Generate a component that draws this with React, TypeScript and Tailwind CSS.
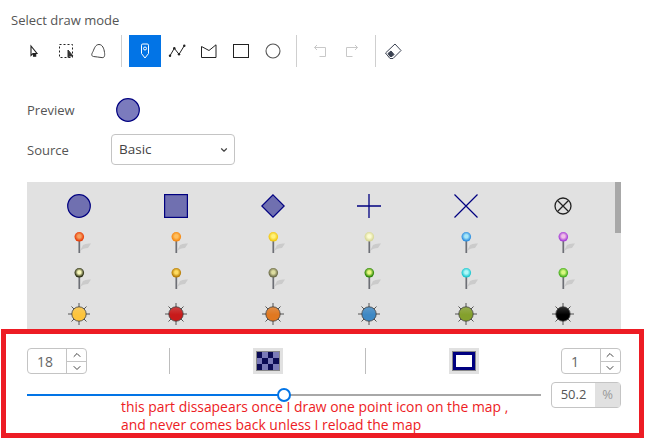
import { ChevronDown, ChevronUp } from "lucide-react";

const NAVY = "#000080";
const FILL = "#7070b0";

const pinColors = [
  ["#f6a060", "#e8400c"],
  ["#ffc060", "#f58a14"],
  ["#fff27a", "#f2c814"],
  ["#fbfbd0", "#d8d898"],
  ["#a8e8f8", "#3090e0"],
  ["#f0c0e8", "#a840d8"],
  ["#f6f6b8", "#2e3216"],
  ["#ffdc60", "#b87e08"],
  ["#dcdca0", "#6e6e4a"],
  ["#e8f880", "#2c8808"],
  ["#b0f8f8", "#20c8d0"],
  ["#d8f880", "#48b020"],
];

const sunColors = ["#fdc43c", "#c81a1a", "#e07820", "#3e88c4", "#84a02c", "#000000"];

function Pin({ index }: { index: number }) {
  const [light, dark] = pinColors[index];
  const id = `pin-${index}`;
  return (
    <svg width="24" height="24" viewBox="0 0 24 24">
      <defs>
        <radialGradient id={id} cx="50%" cy="45%" r="55%">
          <stop offset="0%" stopColor={light} />
          <stop offset="30%" stopColor={light} />
          <stop offset="85%" stopColor={dark} />
        </radialGradient>
      </defs>
      <path d="M13 21 L16 15 Q19 13 24 13.500 L21 18 Q16 18 13 21Z" fill="#cbcbcb" />
      <path d="M12.300 10 V23" stroke="#6d6f76" strokeWidth="1.700" />
      <circle cx="12.300" cy="6.800" r="4.800" fill={`url(#${id})`} />
    </svg>
  );
}

function Sun({ color, index }: { color: string; index: number }) {
  const id = `sun-${index}`;
  return (
    <svg width="24" height="24" viewBox="0 0 24 24">
      <defs>
        <linearGradient id={id} x1="0" y1="0" x2="0" y2="1">
          <stop offset="0%" stopColor={color} stopOpacity="0.8" />
          <stop offset="55%" stopColor={color} />
        </linearGradient>
      </defs>
      <g stroke="#555" strokeWidth="1">
        <path d="M12 1V5M12 19V23M1 12H5M19 12H23M4.500 4.500L7 7M19.500 4.500L17 7M4.500 19.500L7 17M19.500 19.500L17 17" />
      </g>
      <circle cx="12" cy="12" r="7.200" fill={`url(#${id})`} stroke="#3c3c3c" strokeWidth="0.800" />
    </svg>
  );
}

function Shape({ kind }: { kind: string }) {
  return (
    <svg width="24" height="24" viewBox="0 0 24 24" fill={FILL} stroke={NAVY} strokeWidth="1.200">
      {kind === "circle" && <circle cx="12" cy="12" r="11.300" />}
      {kind === "square" && <rect x="0.600" y="0.600" width="22.800" height="22.800" />}
      {kind === "diamond" && <path d="M12 .8 23.200 12 12 23.200 .8 12Z" />}
      {kind === "plus" && <path d="M12 0V24M0 12H24" strokeWidth="1.300" fill="none" />}
      {kind === "x" && <path d="M.5 .5 23.500 23.500M23.500 .5 .5 23.500" fill="none" />}
      {kind === "target" && (
        <g fill="none" stroke="#222" strokeWidth="1.300">
          <circle cx="12" cy="12" r="8" />
          <path d="M6.500 6.500 17.500 17.500M17.500 6.500 6.500 17.500" />
        </g>
      )}
    </svg>
  );
}

function ToolButton({ active, children }: { active?: boolean; children: React.ReactNode }) {
  return (
    <div className={`flex h-8 w-8 items-center justify-center ${active ? "bg-[#0274e6]" : ""}`}>
      {children}
    </div>
  );
}

function Sep({ className }: { className: string }) {
  return <div className={`h-8 w-px bg-[#cfcfcf] ${className}`} />;
}

function Stepper({ value }: { value: string }) {
  return (
    <div className="flex h-[26px] w-[60px] rounded-sm border border-[#c4c4c4]">
      <div className="flex flex-1 items-center pl-[9px] text-[14px] text-[#666]">{value}</div>
      <div className="flex w-[20px] flex-col border-l border-[#c4c4c4] text-[#444]">
        <div className="flex flex-1 items-center justify-center border-b border-[#c4c4c4]">
          <ChevronUp size={12} strokeWidth={2} />
        </div>
        <div className="flex flex-1 items-center justify-center">
          <ChevronDown size={12} strokeWidth={2} />
        </div>
      </div>
    </div>
  );
}

const checker = [
  [1, 0, 1, 0],
  [0, 1, 0, 1],
  [1, 0, 1, 0],
];

export default function App() {
  const shapes = ["circle", "square", "diamond", "plus", "x", "target"];
  return (
    <div className="h-[440px] w-[646px] overflow-hidden bg-white font-['Open_Sans',sans-serif]">
      <div className="pl-[11px] pt-[11px] text-[13px] leading-[18px] text-[#555]">Select draw mode</div>

      {/* draw mode toolbar */}
      <div className="mt-[6px] flex items-center pl-[18px]">
        <ToolButton>
          <svg width="16" height="16" viewBox="0 0 16 16" fill="none" stroke="#222" strokeWidth="1.100">
            <path d="M5 3V12.500L7 10.500H11Z" />
            <rect x="7.500" y="11" width="2.200" height="2.200" fill="#222" />
          </svg>
        </ToolButton>
        <ToolButton>
          <svg width="18" height="18" viewBox="0 0 18 18" fill="none">
            <rect x="2.500" y="2.500" width="13" height="13" stroke="#222" strokeDasharray="2 2" />
            <path d="M11 8V15.500L12.800 14H16Z" fill="#333" stroke="#333" />
          </svg>
        </ToolButton>
        <ToolButton>
          <svg width="16" height="16" viewBox="0 0 16 16" fill="none" stroke="#444" strokeWidth="1">
            <path d="M9 1.500C5.500 1.500 4.500 5 3 8.500 1.500 11 1 13 3.500 13.500 6 14 9 14 12 14.600 14.500 15 15 12.500 14.500 9.500 14 5.500 12.500 1.500 9 1.500Z" />
          </svg>
        </ToolButton>
        <Sep className="mx-[7px]" />
        <ToolButton active>
          <svg width="16" height="16" viewBox="0 0 16 16" fill="none" stroke="#fff" strokeWidth="1">
            <path d="M4.500 2.200Q4.500 1 5.800 1H10.200Q11.500 1 11.500 2.200V10.500L8 15 4.500 10.500Z" />
            <circle cx="8" cy="5.500" r="1.500" />
          </svg>
        </ToolButton>
        <ToolButton>
          <svg width="18" height="18" viewBox="0 0 18 18" fill="none" stroke="#222" strokeWidth="1">
            <path d="M2 13.700 6.300 6.300 11 12.300 16.300 3.700" />
            <g fill="#222" stroke="none">
              <circle cx="2" cy="13.700" r="1.200" />
              <circle cx="6.300" cy="6.300" r="1.200" />
              <circle cx="11" cy="12.300" r="1.200" />
              <circle cx="16.300" cy="3.700" r="1.200" />
            </g>
          </svg>
        </ToolButton>
        <ToolButton>
          <svg width="16" height="14" viewBox="0 0 16 14" fill="none" stroke="#222" strokeWidth="1">
            <path d="M.5 2.500 8 6.500 15 .8V13.500H.5Z" />
          </svg>
        </ToolButton>
        <ToolButton>
          <svg width="16" height="14" viewBox="0 0 16 14" fill="none" stroke="#222" strokeWidth="1">
            <rect x=".5" y=".5" width="15" height="13" />
          </svg>
        </ToolButton>
        <ToolButton>
          <svg width="16" height="16" viewBox="0 0 16 16" fill="none" stroke="#555" strokeWidth="1.100">
            <circle cx="8" cy="8" r="7" />
          </svg>
        </ToolButton>
        <Sep className="mx-[7px]" />
        <ToolButton>
          <svg width="14" height="14" viewBox="0 0 14 14" fill="none" stroke="#c8c8c8" strokeWidth="1">
            <path d="M1.500 3.500H12.500V12.500H6.500M4 1 1.500 3.500 4 6" />
          </svg>
        </ToolButton>
        <ToolButton>
          <svg width="14" height="14" viewBox="0 0 14 14" fill="none" stroke="#c8c8c8" strokeWidth="1">
            <path d="M12.500 3.500H1.500V12.500H7.500M10 1 12.500 3.500 10 6" />
          </svg>
        </ToolButton>
        <Sep className="ml-[7px] mr-px" />
        <ToolButton>
          <svg width="18" height="18" viewBox="0 0 18 18" fill="none" stroke="#3b4252" strokeWidth="1">
            <path d="M1.500 11 11 2 17 8.500 9 16.500H6Z" />
            <path d="M4 11.500 7 9 10 12.500 8 14.500H6Z" fill="#3b4252" />
          </svg>
        </ToolButton>
      </div>

      <div className="mt-[31px] flex h-6 items-center pl-[27px]">
        <div className="w-[89px] pt-[2px] text-[13px] text-[#555]">Preview</div>
        <svg width="24" height="24" viewBox="0 0 24 24">
          <circle cx="12" cy="12" r="11.300" fill="#7b7bbd" stroke={NAVY} strokeWidth="1.200" />
        </svg>
      </div>

      <div className="mt-[12px] flex items-center pl-[27px]">
        <div className="w-[84px] pt-[3px] text-[13px] text-[#555]">Source</div>
        <div className="flex h-[31px] w-[124px] items-center justify-between rounded-sm border border-[#c4c4c4] pl-[7px] pr-[5px] text-[13.500px] text-[#444]">
          <span className="-mt-px">Basic</span>
          <ChevronDown size={10} strokeWidth={2.800} className="text-[#444]" />
        </div>
      </div>

      {/* symbol gallery */}
      <div className="relative ml-[27px] mt-[17px] h-[147px] w-[594px] overflow-hidden bg-[#e1e1e1] pl-[4px] pt-[6px]">
        <div className="grid w-[580px] grid-cols-6">
          {shapes.map((s) => (
            <div key={s} className="flex h-9 items-center justify-center">
              <Shape kind={s} />
            </div>
          ))}
          {pinColors.map((_, i) => (
            <div key={i} className="flex h-9 items-center justify-center">
              <Pin index={i} />
            </div>
          ))}
          {sunColors.map((c, i) => (
            <div key={c} className="flex h-9 items-center justify-center">
              <Sun color={c} index={i} />
            </div>
          ))}
        </div>
        <div className="absolute right-0 top-0 h-[51px] w-[6px] bg-[#a8a8a8]" />
      </div>

      {/* annotated symbol controls */}
      <div className="relative ml-px h-[109px] w-[643px] border-[5px] border-[#ed1c24] pb-[26px] pl-[21px] pr-[18px] pt-[14px]">
        <div className="flex items-center justify-between">
          <Stepper value="18" />
          <div className="h-[26px] w-px bg-[#bdbdbd]" />
          <div className="flex h-[26px] w-[30px] items-center justify-center bg-[#e1e1e1]">
            <div className="grid h-[20px] w-[24px] grid-cols-4 border border-[#888] bg-[#7a7ab8]">
              {checker.flat().map((on, i) => (
                <div key={i} className={on ? "bg-[#0b0b55]" : ""} />
              ))}
            </div>
          </div>
          <div className="h-[26px] w-px bg-[#bdbdbd]" />
          <div className="flex h-[26px] w-[30px] items-center justify-center bg-[#e1e1e1]">
            <div className="border border-[#888]">
              <div className="h-[18px] w-[22px] border-[3px] border-[#000080] bg-white" />
            </div>
          </div>
          <Stepper value="1" />
        </div>

        <div className="mt-2 flex items-center gap-[10px]">
          <div className="relative flex h-[2px] flex-1 bg-[#a8a8a8]">
            <div className="h-full w-[257px] bg-[#0274e6]" />
            <div className="absolute left-[257px] top-1/2 h-[14px] w-[14px] -translate-x-1/2 -translate-y-1/2 rounded-full border-2 border-[#0274e6] bg-white" />
          </div>
          <div className="flex h-[26px] w-[70px] rounded-sm border border-[#c4c4c4]">
            <div className="flex flex-1 items-center justify-center text-[13px] text-[#555]">50.2</div>
            <div className="flex w-[25px] items-center justify-center bg-[#e1e1e1] text-[13px] text-[#999]">%</div>
          </div>
        </div>

        <div className="absolute left-[115px] top-[64px] whitespace-nowrap text-[13.900px] leading-[18px] text-[#ed1c24]">
          <div>this part dissapears once I draw one point icon on the map ,</div>
          <div>and never comes back unless I reload the map</div>
        </div>
      </div>
    </div>
  );
}
